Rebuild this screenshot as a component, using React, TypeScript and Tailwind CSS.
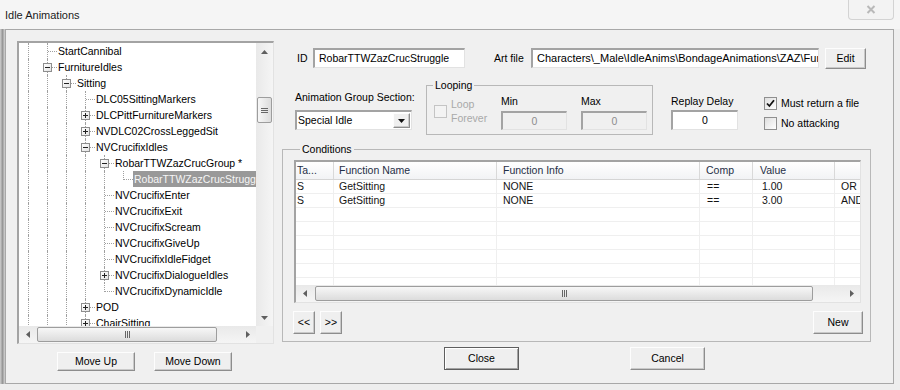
import React from 'react';

type TreeNode = { l: number; t: string; e?: '+' | '-'; sel?: boolean; last?: boolean };

const treeNodes: TreeNode[] = [
  { l: 0, t: 'StartCannibal' },
  { l: 0, t: 'FurnitureIdles', e: '-' },
  { l: 1, t: 'Sitting', e: '-' },
  { l: 2, t: 'DLC05SittingMarkers' },
  { l: 2, t: 'DLCPittFurnitureMarkers', e: '+' },
  { l: 2, t: 'NVDLC02CrossLeggedSit', e: '+' },
  { l: 2, t: 'NVCrucifixIdles', e: '-' },
  { l: 3, t: 'RobarTTWZazCrucGroup *', e: '-' },
  { l: 4, t: 'RobarTTWZazCrucStruggle', sel: true, last: true },
  { l: 3, t: 'NVCrucifixEnter' },
  { l: 3, t: 'NVCrucifixExit' },
  { l: 3, t: 'NVCrucifixScream' },
  { l: 3, t: 'NVCrucifixGiveUp' },
  { l: 3, t: 'NVCrucifixIdleFidget' },
  { l: 3, t: 'NVCrucifixDialogueIdles', e: '+' },
  { l: 3, t: 'NVCrucifixDynamicIdle', last: true },
  { l: 2, t: 'POD', e: '+' },
  { l: 2, t: 'ChairSitting', e: '+' },
];

const colW = ['w-[38px]', 'w-[163px]', 'w-[203px]', 'w-[53px]', 'w-[82px]', 'w-[120px]'];
const headPad = ['pl-[1px]', 'pl-[5px]', 'pl-[6px]', 'pl-[6px]', 'pl-[7px]', 'pl-[6px]'];
const cellPad = ['pl-[1px]', 'pl-[5px]', 'pl-[6px]', 'pl-[7px]', 'pl-[9px]', 'pl-[6px]'];
const headers = ['Ta...', 'Function Name', 'Function Info', 'Comp', 'Value', ''];
const condRows = [
  ['S', 'GetSitting', 'NONE', '==', '1.00', 'OR'],
  ['S', 'GetSitting', 'NONE', '==', '3.00', 'AND'],
  ['', '', '', '', '', ''],
  ['', '', '', '', '', ''],
  ['', '', '', '', '', ''],
  ['', '', '', '', '', ''],
  ['', '', '', '', '', ''],
  ['', '', '', '', '', ''],
];

const sunken =
  'border-t-2 border-l-2 border-r border-b border-t-[#a3a3a3] border-l-[#a3a3a3] border-r-[#e2e2e2] border-b-[#e2e2e2]';
const raised =
  'border border-t-[#fdfdfd] border-l-[#fdfdfd] border-r-[#8d8d8d] border-b-[#8d8d8d] shadow-[inset_-1px_-1px_0_#c9c9c9] bg-[#efefef]';
const defBtn =
  'border border-[#5e5e5e] shadow-[inset_1px_1px_0_#ffffff,inset_-1px_-1px_0_#a3a3a3] bg-[#efefef]';

function ArrowIcon({ dir }: { dir: 'up' | 'down' | 'left' | 'right' }) {
  if (dir === 'up')
    return (
      <svg width="7" height="4" viewBox="0 0 7 4">
        <path d="M0 4 L3.5 0 L7 4 Z" fill="#5f5f5f" />
      </svg>
    );
  if (dir === 'down')
    return (
      <svg width="7" height="4" viewBox="0 0 7 4">
        <path d="M0 0 L7 0 L3.5 4 Z" fill="#5f5f5f" />
      </svg>
    );
  if (dir === 'left')
    return (
      <svg width="4" height="7" viewBox="0 0 4 7">
        <path d="M4 0 L4 7 L0 3.5 Z" fill="#5f5f5f" />
      </svg>
    );
  return (
    <svg width="4" height="7" viewBox="0 0 4 7">
      <path d="M0 0 L4 3.5 L0 7 Z" fill="#5f5f5f" />
    </svg>
  );
}

function VScroll() {
  return (
    <div className="w-[17px] h-full shrink-0 flex flex-col bg-linear-to-r from-[#e9e9e9] to-[#f5f5f5]">
      <div className="h-[17px] flex items-center justify-center">
        <ArrowIcon dir="up" />
      </div>
      <div className="flex-1">
        <div className="mt-[37px] mx-[1px] h-[26px] rounded-[2px] border border-[#9d9d9d] bg-linear-to-r from-[#f7f7f7] to-[#dcdcdc] flex flex-col items-center justify-center gap-[1px]">
          <div className="w-[7px] h-[1px] bg-[#666666]" />
          <div className="w-[7px] h-[1px] bg-[#666666]" />
          <div className="w-[7px] h-[1px] bg-[#666666]" />
        </div>
      </div>
      <div className="h-[17px] flex items-center justify-center">
        <ArrowIcon dir="down" />
      </div>
    </div>
  );
}

function HScroll({ thumb }: { thumb: string }) {
  return (
    <div className="flex-1 h-[17px] flex items-stretch bg-linear-to-b from-[#e9e9e9] to-[#f5f5f5]">
      <div className="w-[17px] shrink-0 flex items-center justify-center">
        <ArrowIcon dir="left" />
      </div>
      <div className="flex-1 flex items-stretch py-[1px]">
        <div
          className={`${thumb} rounded-[2px] border border-[#9d9d9d] bg-linear-to-b from-[#f7f7f7] to-[#dcdcdc] flex items-center justify-center gap-[1px]`}
        >
          <div className="w-[1px] h-[7px] bg-[#666666]" />
          <div className="w-[1px] h-[7px] bg-[#666666]" />
          <div className="w-[1px] h-[7px] bg-[#666666]" />
        </div>
      </div>
      <div className="w-[17px] shrink-0 flex items-center justify-center">
        <ArrowIcon dir="right" />
      </div>
    </div>
  );
}

function Expander({ sign }: { sign: '+' | '-' }) {
  return (
    <div className="absolute left-[5px] top-[4px] w-[9px] h-[9px] border border-[#8e8e8e] bg-linear-to-br from-white to-[#e4e4e4]">
      <div className="absolute left-[1px] top-[3px] w-[5px] h-[1px] bg-[#222222]" />
      {sign === '+' && <div className="absolute left-[3px] top-[1px] w-[1px] h-[5px] bg-[#222222]" />}
    </div>
  );
}

function TreeRow({ n }: { n: TreeNode }) {
  const cells = [];
  for (let k = -1; k < n.l; k++) {
    cells.push(
      <div key={k} className="relative w-[19px] shrink-0">
        <div className="absolute left-[9px] top-0 bottom-0 border-l border-dotted border-[#a0a0a0]" />
      </div>
    );
  }
  return (
    <div className="flex h-[16px] items-stretch">
      {cells}
      <div className="relative w-[19px] shrink-0">
        <div
          className={`absolute left-[9px] top-0 ${n.last ? 'h-[9px]' : 'bottom-0'} border-l border-dotted border-[#a0a0a0]`}
        />
        <div className="absolute left-[10px] right-0 top-[8px] border-t border-dotted border-[#a0a0a0]" />
        {n.e && <Expander sign={n.e} />}
      </div>
      <div
        className={`pl-[1px] pr-[3px] leading-[16px] whitespace-nowrap ${
          n.sel ? 'flex-1 bg-[#999999] text-[#f6f6f6]' : 'text-black'
        }`}
      >
        {n.t}
      </div>
    </div>
  );
}

function Check({ checked = false, disabled = false }: { checked?: boolean; disabled?: boolean }) {
  return (
    <div
      className={`w-[13px] h-[13px] shrink-0 border flex items-center justify-center ${
        disabled
          ? 'border-[#c4c4c4] bg-[#f3f3f3]'
          : 'border-[#8f8f8f] bg-linear-to-br from-[#dedede] to-white'
      }`}
    >
      {checked && (
        <svg width="9" height="9" viewBox="0 0 9 9">
          <path d="M1 4.5 L3.4 7 L8 1.2" stroke="#111111" strokeWidth="1.8" fill="none" />
        </svg>
      )}
    </div>
  );
}

function Tree() {
  return (
    <div className={`w-[257px] h-[303px] ${sunken} bg-white flex flex-col`}>
      <div className="flex h-[283px]">
        <div className="w-[237px] h-full overflow-hidden bg-white">
          {treeNodes.map((n, i) => (
            <TreeRow key={i} n={n} />
          ))}
        </div>
        <VScroll />
      </div>
      <div className="flex h-[17px]">
        <HScroll thumb="ml-[1px] w-[180px]" />
        <div className="w-[17px] bg-[#f0f0f0]" />
      </div>
    </div>
  );
}

function ConditionsTable() {
  return (
    <div className={`mt-[4px] w-[567px] h-[143px] ${sunken} bg-white flex flex-col overflow-hidden`}>
      <div className="flex-1 overflow-hidden">
        <div className="flex h-[18px] border-b border-[#d5d5d5] bg-linear-to-b from-white to-[#f2f3f5] text-[#1f2f46]">
          {headers.map((h, i) => (
            <div
              key={i}
              className={`${colW[i]} ${headPad[i]} shrink-0 border-r border-[#d9d9d9] leading-[17px] whitespace-nowrap`}
            >
              {h}
            </div>
          ))}
        </div>
        {condRows.map((r, ri) => (
          <div key={ri} className="flex h-[14px] border-b border-[#efefef] text-[#141414]">
            {r.map((c, ci) => (
              <div
                key={ci}
                className={`${colW[ci]} ${cellPad[ci]} shrink-0 border-r border-[#efefef] leading-[13px] whitespace-nowrap`}
              >
                {c}
              </div>
            ))}
          </div>
        ))}
      </div>
      <div className="flex h-[17px] shrink-0">
        <HScroll thumb="ml-[2px] w-[498px]" />
      </div>
    </div>
  );
}

export default function App() {
  return (
    <div className="w-[900px] h-[390px] overflow-hidden flex flex-col bg-[#eeeeee] text-[10.5px] text-black font-['Liberation_Sans',Arial,sans-serif]">
      <div className="h-[29px] shrink-0 flex items-start justify-between bg-[#f5f5f5]">
        <span className="ml-[5px] mt-[8px] leading-[14px] text-[11px] text-[#1b1b1b] [text-shadow:0_0_4px_#ffffff]">
          Idle Animations
        </span>
        <div className="mr-[6px] w-[46px] h-[20px] border border-t-0 border-[#d3d3d3] rounded-b-[4px] flex items-center justify-center bg-[#f3f3f3]">
          <svg width="10" height="9" viewBox="0 0 10 9">
            <path d="M1.5 1 L8.5 8 M8.5 1 L1.5 8" stroke="#b9b9b9" strokeWidth="2" />
          </svg>
        </div>
      </div>

      <div className="flex h-[355px] shrink-0">
        <div className="w-[5px] bg-linear-to-r from-[#d0d0d0] via-[#979797] to-[#d4d4d4]" />
        <div className="w-[889px] h-full border border-[#a8a8a8] bg-[#f0f0f0] flex">
          {/* left: tree */}
          <div className="pl-[11px] pt-[11px] flex flex-col">
            <Tree />
            <div className="flex mt-[8px]">
              <button type="button" className={`ml-[40px] w-[78px] h-[19px] ${raised} leading-[17px]`}>
                Move Up
              </button>
              <button type="button" className={`ml-[19px] w-[78px] h-[19px] ${raised} leading-[17px]`}>
                Move Down
              </button>
            </div>
          </div>

          {/* right: form */}
          <div className="ml-[8px] w-[590px] flex flex-col">
            <div className="mt-[18px] h-[21px] flex items-start">
              <span className="ml-[15px] w-[16px] leading-[20px]">ID</span>
              <div className={`w-[152px] h-[20px] ${sunken} bg-white pl-[4px] leading-[17px] whitespace-nowrap overflow-hidden`}>
                RobarTTWZazCrucStruggle
              </div>
              <span className="ml-[29px] w-[37px] leading-[20px] whitespace-nowrap">Art file</span>
              <div className={`w-[288px] h-[20px] ${sunken} bg-white pl-[4px] text-[11px] leading-[17px] whitespace-nowrap overflow-hidden`}>
                {'Characters\\_Male\\IdleAnims\\BondageAnimations\\ZAZ\\Furn'}
              </div>
              <button type="button" className={`ml-[6px] w-[41px] h-[21px] ${raised} leading-[19px]`}>
                Edit
              </button>
            </div>

            <div className="mt-[10px] h-[56px] flex items-start">
              <div className="ml-[13px] w-[117px] flex flex-col">
                <span className="mt-[12px] leading-[13px] whitespace-nowrap">Animation Group Section:</span>
                <div className={`mt-[6px] h-[20px] ${sunken} bg-white flex items-center`}>
                  <span className="pl-[1px] leading-[17px] whitespace-nowrap">Special Idle</span>
                  <div className={`ml-auto mr-[1px] w-[17px] h-[15px] ${raised} flex items-center justify-center`}>
                    <svg width="7" height="4" viewBox="0 0 7 4">
                      <path d="M0 0 L7 0 L3.5 4 Z" fill="#111111" />
                    </svg>
                  </div>
                </div>
              </div>

              <fieldset className="ml-[14px] w-[227px] h-[56px] border border-[#b8b8b8]">
                <legend className="ml-[6px] px-[2px] leading-[13px]">Looping</legend>
                <div className="flex items-start pl-[7px]">
                  <div className="w-[67px] mt-[5px] flex items-center gap-[4px]">
                    <Check disabled />
                    <div className="leading-[14px] text-[#a9a9a9]">
                      <div>Loop</div>
                      <div>Forever</div>
                    </div>
                  </div>
                  <div className="w-[66px] flex flex-col">
                    <span className="mt-[3px] leading-[13px]">Min</span>
                    <div className={`mt-[3px] h-[19px] ${sunken} bg-[#f0f0f0] text-center leading-[16px] text-[#8d8d8d]`}>0</div>
                  </div>
                  <div className="ml-[14px] w-[66px] flex flex-col">
                    <span className="mt-[3px] leading-[13px]">Max</span>
                    <div className={`mt-[3px] h-[19px] ${sunken} bg-[#f0f0f0] text-center leading-[16px] text-[#8d8d8d]`}>0</div>
                  </div>
                </div>
              </fieldset>

              <div className="ml-[18px] w-[67px] flex flex-col">
                <span className="mt-[16px] leading-[13px] whitespace-nowrap">Replay Delay</span>
                <div className={`mt-[2px] h-[20px] ${sunken} bg-white text-center leading-[17px]`}>0</div>
              </div>

              <div className="ml-[26px] mt-[18px] flex flex-col gap-[7px]">
                <div className="flex items-center gap-[4px]">
                  <Check checked />
                  <span className="leading-[13px] whitespace-nowrap">Must return a file</span>
                </div>
                <div className="flex items-center gap-[4px]">
                  <Check />
                  <span className="leading-[13px] whitespace-nowrap">No attacking</span>
                </div>
              </div>
            </div>

            <fieldset className="mt-[8px] w-[589px] h-[199px] border border-[#b8b8b8] pl-[11px]">
              <legend className="ml-[6px] px-[2px] leading-[13px]">Conditions</legend>
              <ConditionsTable />
              <div className="mt-[8px] w-[567px] h-[23px] flex items-center">
                <button type="button" className={`-ml-[1px] w-[22px] h-[23px] ${raised} leading-[21px]`}>
                  {'<<'}
                </button>
                <button type="button" className={`ml-[5px] w-[22px] h-[23px] ${raised} leading-[21px]`}>
                  {'>>'}
                </button>
                <button type="button" className={`ml-auto -mr-[2px] w-[50px] h-[23px] ${raised} leading-[21px]`}>
                  New
                </button>
              </div>
            </fieldset>

            <div className="mt-[5px] h-[23px] flex">
              <button type="button" className={`ml-[162px] w-[75px] h-[23px] ${defBtn} leading-[21px]`}>
                Close
              </button>
              <button type="button" className={`ml-[111px] w-[75px] h-[23px] ${raised} leading-[21px]`}>
                Cancel
              </button>
            </div>
          </div>
        </div>
      </div>
    </div>
  );
}
